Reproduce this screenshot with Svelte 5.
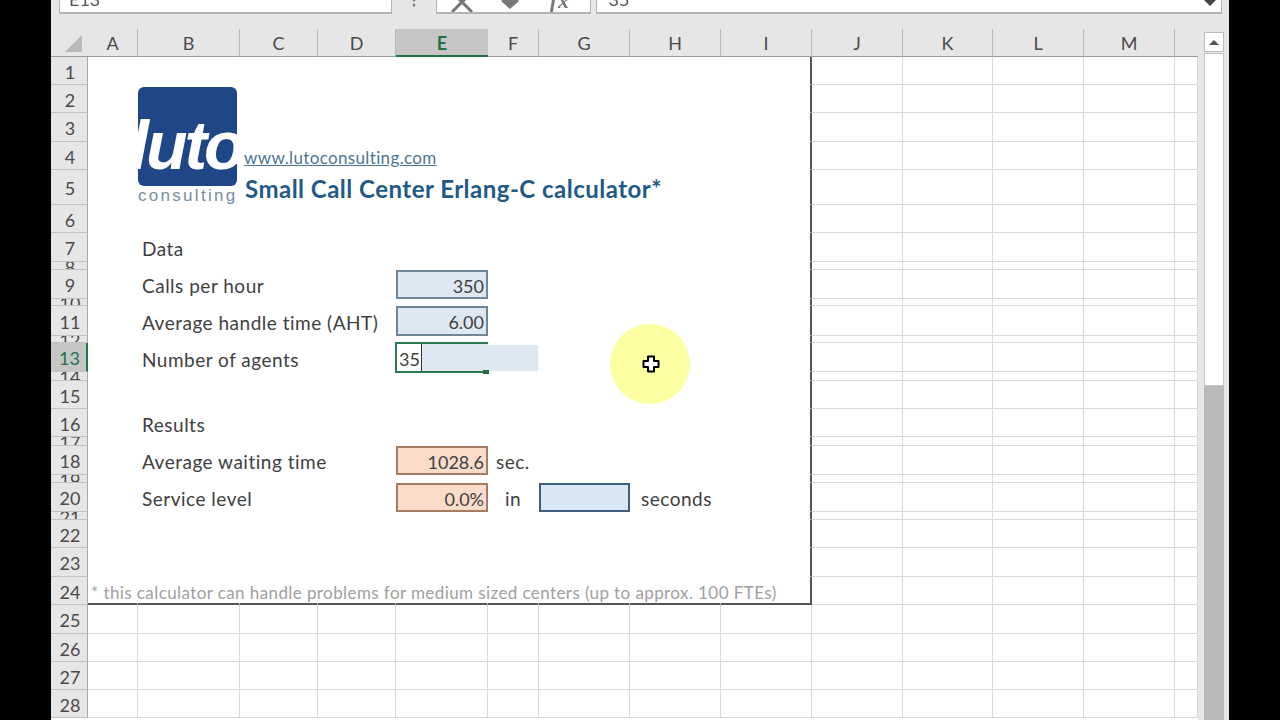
<script>
  const colLetters = ['A','B','C','D','E','F','G','H','I','J','K','L','M',''];
  const rowNums = Array.from({ length: 28 }, (_, i) => i + 1);
  const content = {
    C4: { text: 'www.lutoconsulting.com', cls: 'link' },
    C5: { text: 'Small Call Center Erlang-C calculator*', cls: 'title' },
    B7: { text: 'Data', cls: 'label' },
    B9: { text: 'Calls per hour', cls: 'label' },
    E9: { text: '350', cls: 'box input' },
    B11: { text: 'Average handle time (AHT)', cls: 'label' },
    E11: { text: '6.00', cls: 'box input' },
    B13: { text: 'Number of agents', cls: 'label lower' },
    F13: { text: '', cls: 'overflow' },
    B16: { text: 'Results', cls: 'label' },
    B18: { text: 'Average waiting time', cls: 'label' },
    E18: { text: '1028.6', cls: 'box output' },
    F18: { text: 'sec.', cls: 'label unit' },
    B20: { text: 'Service level', cls: 'label' },
    E20: { text: '0.0%', cls: 'box output' },
    F20: { text: 'in', cls: 'label center' },
    G20: { text: '', cls: 'box blank' },
    H20: { text: 'seconds', cls: 'label seconds' },
    A24: { text: '* this calculator can handle problems for medium sized centers (up to approx. 100 FTEs)', cls: 'note' }
  };
  function cellClass(c, r) {
    const idx = colLetters.indexOf(c);
    const inPanel = idx >= 0 && idx <= 8 && r <= 24;
    let s = inPanel ? 'cell panel' : 'cell';
    if (inPanel && idx === 8) s += ' edge-r';
    if (inPanel && r === 24) s += ' edge-b';
    return s;
  }
</script>

<div class="screen">
  <div class="bar"></div>
  <main class="app">
    <div class="formula">
      <div class="fbox name"><span class="clip">E13</span></div>
      <div class="dots">⋮</div>
      <div class="fbox tools">
        <svg viewBox="0 0 154 14" width="154" height="14">
          <path d="M15 -8 L35 12 M35 -8 L15 12" stroke="#777" stroke-width="3" fill="none"/>
          <path d="M64 1 L73 9 L82 1 L73 -6 Z" fill="#777"/>
        </svg>
        <span class="fx">fx</span>
      </div>
      <div class="fbox value"><span class="clip">35</span><span class="drop"></span></div>
    </div>

    <div class="workarea">
      <div class="sheet">
        <div class="corner"><span class="tri"></span></div>
        {#each colLetters as c}
          <div class="colhead" class:active={c === 'E'}>{c}</div>
        {/each}
        {#each rowNums as r}
          <div class="rowhead" class:active={r === 13}><span>{r}</span></div>
          {#each colLetters as c}
            {@const k = content[c + r]}
            <div class={cellClass(c, r)}>
              {#if c === 'E' && r === 13}
                <div class="edit"><span>35</span><i class="caret"></i><i class="fill"></i><b class="handle"></b></div>
              {:else if k}
                <div class={k.cls}>{k.text}</div>
              {/if}
            </div>
          {/each}
        {/each}
      </div>
      <div class="scroll">
        <div class="up"><span></span></div>
        <div class="thumb"></div>
        <div class="track"></div>
      </div>

      <div class="logo">
        <div class="mark"><span>luto</span></div>
        <div class="sub">consulting</div>
      </div>
      <div class="spot">
        <svg viewBox="0 0 20 20" width="20" height="20">
          <path d="M7 2.5h6v4.5h4.5v6H13v4.5H7V13H2.5V7H7z" fill="#fff" stroke="#000" stroke-width="2" stroke-linejoin="round"/>
        </svg>
      </div>
    </div>
  </main>
  <div class="bar"></div>
</div>

<style>
  :global(body) { margin: 0; background: #000; overflow: hidden; }
  .screen { width: 1280px; height: 720px; display: flex; overflow: hidden; font-family: "Lato", "Open Sans", sans-serif; color: #404040; }
  .bar { width: 51px; flex: none; background: #000; }
  .app { width: 1178px; flex: none; background: #e6e6e6; display: flex; flex-direction: column; filter: blur(0.45px); }

  .formula { height: 14px; flex: none; margin-bottom: 15px; padding: 0 7px 0 8px; display: flex; box-sizing: border-box; }
  .fbox { background: #fff; border: solid #b4b4b4; border-width: 0 1px 2px; box-sizing: border-box; height: 14px; overflow: hidden; display: flex; align-items: flex-end; position: relative; }
  .name { width: 333px; padding: 0 0 3px 9px; }
  .dots { width: 44px; text-align: center; font: bold 16px/10px "Liberation Sans", sans-serif; margin-top: -5px; height: 14px; overflow: hidden; color: #777; }
  .tools { width: 155px; margin-right: 5px; }
  .tools svg { position: absolute; left: 0; top: 0; }
  .fx { position: absolute; left: 113px; bottom: 0; font: italic bold 22px/22px "Liberation Serif", serif; color: #777; letter-spacing: 1px; }
  .value { width: 627px; padding: 0 0 3px 12px; }
  .clip { font-size: 18px; line-height: 20px; color: #555; }
  .drop { position: absolute; right: 5px; top: 0; border: solid transparent; border-width: 6px 6px 0; border-top-color: #444; }

  .workarea { position: relative; display: flex; flex: 1; min-height: 0; }
  .sheet {
    width: 1147px; flex: none; display: grid; background: #fff;
    grid-template-columns: 37px 50px 102px 78px 78px 92px 51px 91px 91px 91px 91px 90px 91px 91px 23px;
    grid-template-rows: 28px 28px 28px 29px 28px 35px 28px 29px 8px 29px 7px 30px 7px 29px 9px 28px 28px 9px 29px 8px 29px 8px 28px 29px 28px 29px 28px 28px 28px;
  }
  .corner { background: #e6e6e6; border-bottom: 1px solid #9a9a9a; position: relative; box-sizing: border-box; }
  .tri { position: absolute; left: 14px; top: 6px; border-style: solid; border-width: 0 0 17px 17px; border-color: transparent transparent #b9b9b9 transparent; }
  .colhead { background: #e6e6e6; border-bottom: 1px solid #9a9a9a; border-right: 1px solid #b8b8b8; box-sizing: border-box; display: flex; align-items: center; justify-content: center; font-size: 18px; color: #4a4a4a; padding: 1px 0 0 0; }
  .colhead:nth-child(15) { border-right: 0; }
  .colhead.active { background: #c6c6c6; color: #217346; font-weight: 700; border-bottom: 2px solid #217346; border-right: 0; }
  .rowhead { background: #e6e6e6; border-bottom: 1px solid #c2c2c2; border-right: 1px solid #a8a8a8; box-sizing: border-box; display: flex; align-items: center; justify-content: center; overflow: hidden; font-size: 18px; color: #4a4a4a; }
  .rowhead span { line-height: 20px; position: relative; top: 1px; left: 1px; }
  .rowhead.active { background: #c6c6c6; color: #217346; border-right: 2px solid #217346; }

  .cell { border-right: 1px solid #d9d9d9; border-bottom: 1px solid #d9d9d9; box-sizing: border-box; min-width: 0; min-height: 0; }
  .cell.panel { border-color: transparent; }
  .cell.edge-r { border-right: 2px solid #555; }
  .cell.edge-b { border-bottom: 2px solid #555; }

  .label, .link, .title, .note { white-space: nowrap; height: 100%; display: flex; align-items: center; }
  .label { font-size: 19px; padding-left: 4px; letter-spacing: 0.5px; padding-top: 3px; box-sizing: border-box; }
  .lower { padding-top: 5px; }
  .unit { padding-left: 8px; }
  .center { justify-content: center; padding-left: 0; }
  .seconds { padding-left: 11px; }
  .link { font-size: 17px; padding-left: 4px; color: #4b7596; text-decoration: underline; align-items: flex-end; padding-bottom: 1px; box-sizing: border-box; letter-spacing: 0.35px; }
  .title { font-size: 24px; font-weight: 700; color: #215a86; padding: 2px 0 0 5px; box-sizing: border-box; letter-spacing: 0.48px; }
  .note { font-size: 17px; padding: 5px 0 0 3px; box-sizing: border-box; color: #a0a0a0; letter-spacing: 0.41px; }

  .box { box-sizing: border-box; border: 2px solid; display: flex; align-items: center; justify-content: flex-end; padding: 2px 2px 0 0; font-size: 18px; margin-right: -1px; margin-bottom: -1px; height: calc(100% + 1px); }
  .input { background: #dde8f3; border-color: #6f8698; }
  .output { background: #fbdccb; border-color: #a37c62; }
  .blank { background: #d9e6f3; border-color: #3f5e7c; }

  .edit { position: relative; height: calc(100% + 3px); margin: -1px -1px 0 -1px; border: solid #2c7a4f; border-width: 2px 0 2px 2px; box-sizing: border-box; display: flex; align-items: center; font-size: 18px; padding: 0 0 0 2px; }
  .edit span { width: 22px; flex: none; padding-top: 2px; }
  .caret { width: 1px; height: 100%; background: #333; flex: none; }
  .fill { flex: 1; align-self: stretch; background: #dde8f3; }
  .handle { position: absolute; right: -1px; bottom: -3px; width: 6px; height: 4px; background: #1f6b43; }
  .overflow { margin: 2px 0; height: calc(100% - 2px); background: #dde8f3; }

  .scroll { margin-left: 6px; width: 21px; flex: none; display: flex; flex-direction: column; padding-top: 3px; box-sizing: border-box; }
  .up { height: 20px; width: 20px; background: #fff; border: 1px solid #bdbdbd; box-sizing: border-box; display: flex; align-items: center; justify-content: center; margin-bottom: 1px; }
  .up span { border: solid transparent; border-width: 0 5px 5px; border-bottom-color: #555; }
  .thumb { height: 333px; width: 20px; background: #fff; border: 1px solid #c4c4c4; box-sizing: border-box; }
  .track { flex: 1; background: #b9b9b9; width: 20px; }

  .logo { position: absolute; left: 87px; top: 58px; width: 100px; }
  .mark { width: 99px; height: 99px; background: #1f4788; border-radius: 6px; overflow: hidden; position: relative; }
  .mark span { position: absolute; left: -8px; top: 24px; font: italic bold 68px/68px "Liberation Sans", sans-serif; color: #fff; letter-spacing: -3px; white-space: nowrap; }
  .sub { font: 17px/18px "Liberation Sans", sans-serif; color: #7a8ca3; letter-spacing: 2.3px; margin-top: 1px; white-space: nowrap; }

  .spot { position: absolute; left: 559px; top: 295px; width: 80px; height: 80px; border-radius: 50%; background: #fdfda2; display: flex; align-items: center; justify-content: center; }
  .spot svg { position: relative; left: 1px; }
</style>
